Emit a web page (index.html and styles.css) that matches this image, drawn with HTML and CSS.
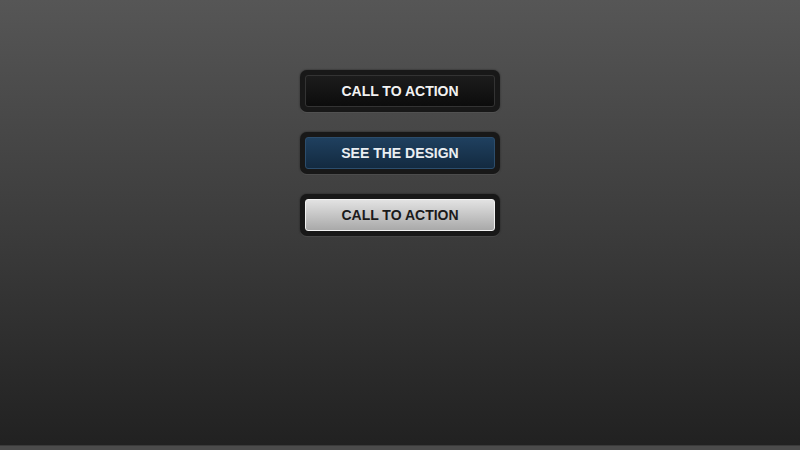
FILE: index.html
```html
<!DOCTYPE html>
<html lang="en">
<head>
    <meta charset="UTF-8">
    <meta name="viewport" content="width=device-width, initial-scale=1.0">
    <title>Buttons</title>
    <link rel="stylesheet" href="styles.css">
</head>
<body>
<div class="stage">
    <!-- Three framed call-to-action buttons -->
    <div class="button-list">
        <div class="frame"><a class="btn btn-black" href="#">Call to action</a></div>
        <div class="frame"><a class="btn btn-blue" href="#">See the design</a></div>
        <div class="frame"><a class="btn btn-silver" href="#">Call to action</a></div>
    </div>
</div>
<div class="footer-strip"></div>
</body>
</html>
```

FILE: styles.css
```css
/* Dark gradient page with centred button stack */
body {
    margin: 0;
    height: 100vh;
    display: flex;
    flex-direction: column;
    font-family: "Liberation Sans", Arial, sans-serif;
    background-color: #4b4b4b;
}
.stage {
    flex: 1;
    background: linear-gradient(to bottom, #565656 0%, #3a3a3a 55%, #212121 100%);
}
.footer-strip {
    height: 4px;
    background-color: #4b4b4b;
    border-top: 1px solid #3a3a3a;
}
.button-list {
    display: flex;
    flex-direction: column;
    align-items: center;
    gap: 20px;
    padding-top: 70px;
}
.frame {
    width: 190px;
    padding: 5px;
    background-color: #181818;
    border-radius: 7px;
    box-shadow: 0 1px 1px rgba(255, 255, 255, 0.12), 0 0 2px rgba(0, 0, 0, 0.6);
}
.btn {
    display: block;
    height: 30px;
    line-height: 30px;
    text-align: center;
    text-decoration: none;
    text-transform: uppercase;
    font-weight: bold;
    font-size: 14px;
    border-radius: 3px;
}
.btn-black {
    color: #f2f2f2;
    border: 1px solid #333;
    background: linear-gradient(to bottom, #1c1c1c, #0c0c0c);
}
.btn-blue {
    color: #eaeef2;
    border: 1px solid #2c4d6c;
    background: linear-gradient(to bottom, #1f405f, #132a40);
}
.btn-silver {
    color: #1a1a1a;
    border: 1px solid #f2f2f2;
    background: linear-gradient(to bottom, #e2e2e2, #a9a9a9);
}
```
